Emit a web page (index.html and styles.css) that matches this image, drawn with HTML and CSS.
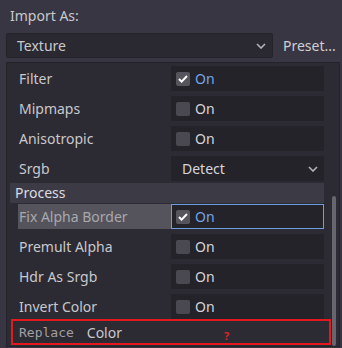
FILE: index.html
```html
<!DOCTYPE html>
<html>

<head>
  <meta charset="utf8">
  <link rel="stylesheet" href="styles.css">
  <title>Import</title>
</head>

<body>
  <div class="import-label">Import As:</div>

  <div class="import-bar">
    <div class="select wide">
      <span>Texture</span>
      <svg class="chevron" width="10" height="6" viewBox="0 0 10 6"><path d="M1 1l4 4 4-4" fill="none" stroke="#b4b3ba" stroke-width="1.6"/></svg>
    </div>
    <div class="preset">Preset...</div>
  </div>

  <div class="inspector">
    <div class="props">
      <div class="prop">
        <div class="label">Filter</div>
        <div class="value"><span class="check on"><svg width="10" height="8" viewBox="0 0 10 8"><path d="M1 4l2.6 2.6L9 1" fill="none" stroke="#fff" stroke-width="2"/></svg></span><span class="on-text">On</span></div>
      </div>
      <div class="prop">
        <div class="label">Mipmaps</div>
        <div class="value"><span class="check"></span><span>On</span></div>
      </div>
      <div class="prop">
        <div class="label">Anisotropic</div>
        <div class="value"><span class="check"></span><span>On</span></div>
      </div>
      <div class="prop">
        <div class="label">Srgb</div>
        <div class="value select-value">
          <span>Detect</span>
          <svg class="chevron" width="10" height="6" viewBox="0 0 10 6"><path d="M1 1l4 4 4-4" fill="none" stroke="#b4b3ba" stroke-width="1.6"/></svg>
        </div>
      </div>

      <div class="section">Process</div>

      <div class="prop">
        <div class="label hover">Fix Alpha Border</div>
        <div class="value focus"><span class="check on"><svg width="10" height="8" viewBox="0 0 10 8"><path d="M1 4l2.6 2.6L9 1" fill="none" stroke="#fff" stroke-width="2"/></svg></span><span class="on-text">On</span></div>
      </div>
      <div class="prop">
        <div class="label">Premult Alpha</div>
        <div class="value"><span class="check"></span><span>On</span></div>
      </div>
      <div class="prop">
        <div class="label">Hdr As Srgb</div>
        <div class="value"><span class="check"></span><span>On</span></div>
      </div>
      <div class="prop">
        <div class="label">Invert Color</div>
        <div class="value"><span class="check"></span><span>On</span></div>
      </div>

      <div class="missing">
        <span class="mono">Replace</span>
        <span class="missing-name">Color</span>
        <span class="question">?</span>
      </div>
    </div>

    <div class="scroll">
      <div class="thumb"></div>
    </div>
  </div>
</body>

</html>
```

FILE: styles.css
```css
body {
  margin: 0;
  height: 348px;
  overflow: hidden;
  background: #373642;
  color: #c9c8cd;
  font-family: "Noto Sans", sans-serif;
  font-size: 14px;
}
.import-label {
  height: 33px;
  line-height: 32px;
  padding-left: 10px;
}
.import-bar {
  display: flex;
  align-items: center;
  margin-left: 6px;
  height: 25px;
}
.select {
  box-sizing: border-box;
  display: flex;
  align-items: center;
  justify-content: space-between;
  height: 25px;
  background: #2a2931;
  border: 1px solid #24232a;
  border-radius: 2px;
}
.select.wide {
  width: 267px;
  padding: 0 6px 0 10px;
}
.preset {
  margin-left: 10px;
  color: #cfced3;
}
.inspector {
  display: flex;
  margin: 4px 2px 0 6px;
  height: 283px;
  overflow: hidden;
  background: #2c2b33;
  border: 1px solid #24232a;
}
.props {
  flex: 1;
  padding: 3px 0 0 3px;
}
.prop {
  display: flex;
  height: 25px;
  margin-left: 8px;
  margin-bottom: 5px;
}
.label {
  width: 153px;
  line-height: 25px;
  padding-left: 1px;
  box-sizing: border-box;
}
.label.hover {
  background: #55545c;
  color: #a9a8ad;
}
.value {
  box-sizing: border-box;
  width: 153px;
  display: flex;
  align-items: center;
  padding-left: 5px;
  background: #24232a;
  color: #d6d5da;
}
.value.focus {
  border: 1px solid #6d9fe0;
  padding-left: 4px;
}
.select-value {
  justify-content: space-between;
  padding: 0 6px 0 11px;
}
.check {
  display: flex;
  align-items: center;
  justify-content: center;
  width: 14px;
  height: 14px;
  margin-right: 5px;
  border-radius: 2px;
  background: #4a4951;
}
.check.on {
  background: #56555d;
}
.on-text {
  color: #76a3e6;
}
.section {
  height: 20px;
  line-height: 20px;
  margin-top: -3px;
  margin-bottom: 1px;
  padding-left: 5px;
  background: #3c3b45;
  color: #dddce1;
}
.missing {
  box-sizing: border-box;
  display: flex;
  align-items: center;
  height: 26px;
  margin: -5px -7px 0 1px;
  padding-left: 6px;
  border: 2px solid #e2191f;
}
.mono {
  font-family: "DejaVu Sans Mono", monospace;
  font-size: 13px;
  color: #a19fa5;
}
.missing-name {
  margin-left: 13px;
}
.question {
  margin-left: 102px;
  margin-top: 6px;
  color: #d8262c;
  font-size: 11px;
  font-weight: bold;
}
.scroll {
  width: 16px;
  padding-left: 8px;
  box-sizing: border-box;
}
.thumb {
  width: 4px;
  height: 150px;
  margin-top: 133px;
  border-radius: 2px;
  background: #67666e;
}
```
